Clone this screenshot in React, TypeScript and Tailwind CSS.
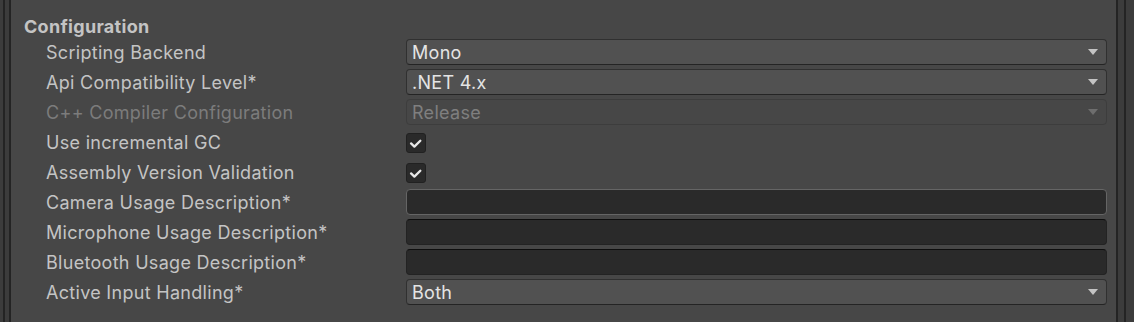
import React from "react";

const font = { fontFamily: "Inter, 'Noto Sans', sans-serif" };

function Arrow({ disabled }: { disabled?: boolean }) {
  return (
    <svg width="12" height="8" viewBox="0 0 12 8" className="shrink-0">
      <path d="M1 1 L11 1 L6 7 Z" fill={disabled ? "#6e6e6e" : "#c4c4c4"} />
    </svg>
  );
}

function Dropdown({ value, disabled }: { value: string; disabled?: boolean }) {
  if (disabled) {
    return (
      <div className="flex h-[26px] w-[701px] items-center justify-between rounded-[4px] border border-[#3d3d3d] bg-[#474747] pl-[5px] pr-[7px] text-[#7f7f7f]">
        <span className="pt-[2px]">{value}</span>
        <Arrow disabled />
      </div>
    );
  }
  return (
    <div className="flex h-[26px] w-[701px] items-center justify-between rounded-[4px] border border-[#303030] border-b-[#242424] bg-[#515151] pl-[5px] pr-[7px] text-[#e4e4e4]">
      <span className="pt-[2px]">{value}</span>
      <Arrow />
    </div>
  );
}

function TextField({ focused }: { focused?: boolean }) {
  return focused ? (
    <div className="h-[26px] w-[701px] rounded-[4px] border border-[#656565] bg-[#2a2a2a]" />
  ) : (
    <div className="h-[26px] w-[701px] rounded-[4px] border border-[#232323] border-t-[#0e0e0e] bg-[#2a2a2a]" />
  );
}

function Checkbox() {
  return (
    <div className="mt-[2px] flex h-[20px] w-[20px] items-center justify-center rounded-[3px] border border-[#212121] bg-[#2a2a2a]">
      <svg width="20" height="20" viewBox="0 0 20 20">
        <path
          d="M4.5 10.5 L8.2 14 L14.8 7.5"
          fill="none"
          stroke="#e8e8e8"
          strokeWidth="2.6"
          strokeLinecap="round"
          strokeLinejoin="round"
        />
      </svg>
    </div>
  );
}

function Row({
  label,
  disabled,
  children,
}: {
  label: string;
  disabled?: boolean;
  children: React.ReactNode;
}) {
  return (
    <div className="flex h-[26px] items-center">
      <div
        className={
          "w-[395px] shrink-0 pl-[35px] pt-[2px] " +
          (disabled ? "text-[#7c7c7c]" : "text-[#c4c4c4]")
        }
      >
        {label}
      </div>
      {children}
    </div>
  );
}

export default function App() {
  return (
    <div
      className="flex h-[322px] w-[1134px] bg-[#3c3c3c] text-[18px] leading-none tracking-[0.3px]"
      style={font}
    >
      <div className="w-[3px]" />
      <div className="w-[2px] bg-[#242424]" />
      <div className="w-[4px]" />
      <div className="w-[2px] bg-[#242424]" />
      <div className="flex flex-1 flex-col bg-[#474747] pt-[12px]">
        <div className="flex h-[27px] items-center pl-[13px] pt-[2px] font-bold text-[#c4c4c4]">
          Configuration
        </div>
        <div className="flex flex-col gap-[4px]">
          <Row label="Scripting Backend">
            <Dropdown value="Mono" />
          </Row>
          <Row label="Api Compatibility Level*">
            <Dropdown value=".NET 4.x" />
          </Row>
          <Row label="C++ Compiler Configuration" disabled>
            <Dropdown value="Release" disabled />
          </Row>
          <Row label="Use incremental GC">
            <Checkbox />
          </Row>
          <Row label="Assembly Version Validation">
            <Checkbox />
          </Row>
          <Row label="Camera Usage Description*">
            <TextField focused />
          </Row>
          <Row label="Microphone Usage Description*">
            <TextField />
          </Row>
          <Row label="Bluetooth Usage Description*">
            <TextField />
          </Row>
          <Row label="Active Input Handling*">
            <Dropdown value="Both" />
          </Row>
        </div>
      </div>
      <div className="w-[2px] bg-[#242424]" />
      <div className="w-[6px]" />
      <div className="w-[2px] bg-[#242424]" />
      <div className="w-[8px]" />
    </div>
  );
}
